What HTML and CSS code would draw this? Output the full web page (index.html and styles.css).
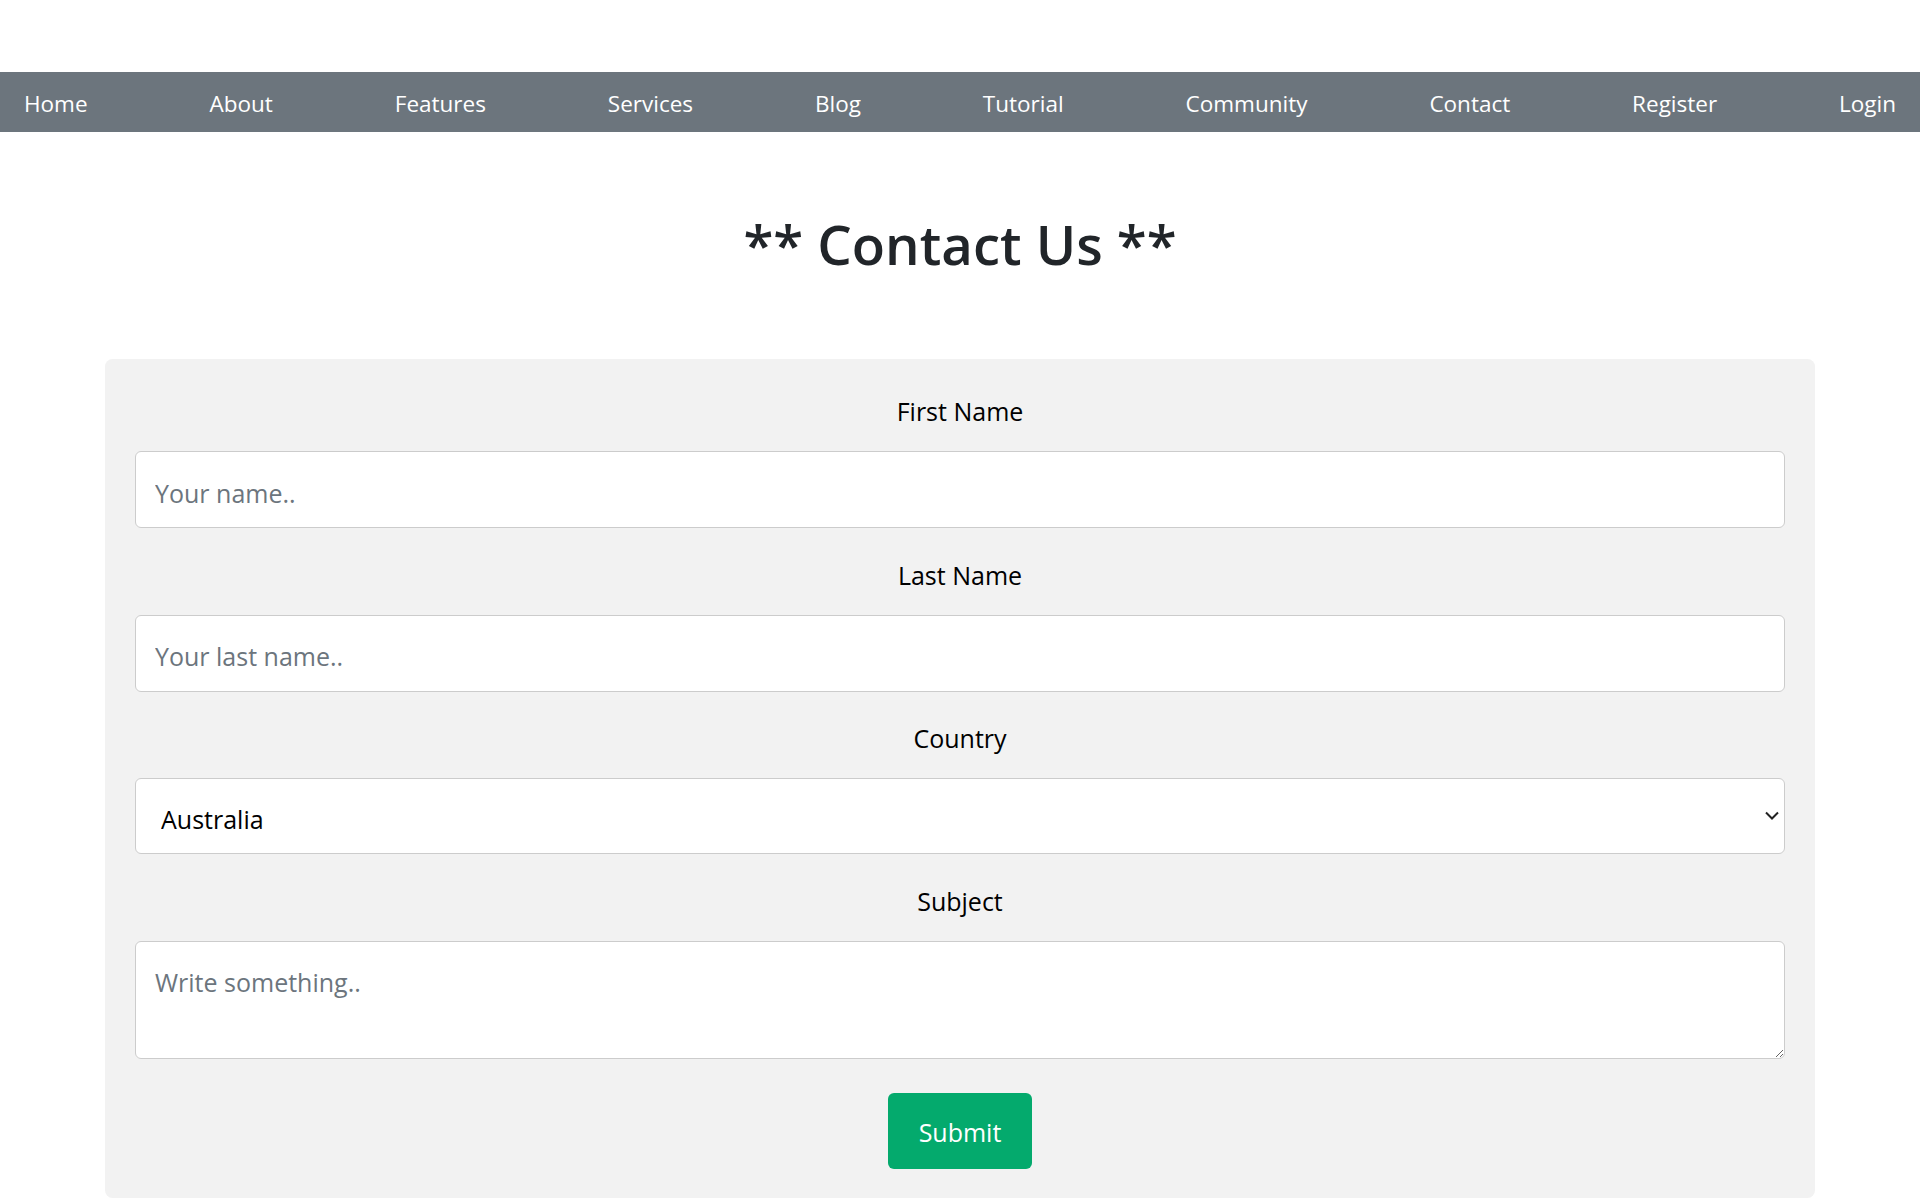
FILE: index.html
```html
<!DOCTYPE html>
<html lang="en">
<head>
<meta charset="utf-8">
<title>Contact Us</title>
<link rel="stylesheet" href="styles.css">
</head>
<body>
<div class="topspace"></div>
<nav class="navbar">
  <a href="#">Home</a>
  <a href="#">About</a>
  <a href="#">Features</a>
  <a href="#">Services</a>
  <a href="#">Blog</a>
  <a href="#">Tutorial</a>
  <a href="#">Community</a>
  <a href="#">Contact</a>
  <a href="#">Register</a>
  <a href="#">Login</a>
</nav>
<h1 class="title">** Contact Us **</h1>
<div class="container">
  <form class="contact-form">
    <label class="field-label" for="fname">First Name</label>
    <input class="field-input" type="text" id="fname" placeholder="Your name..">
    <label class="field-label" for="lname">Last Name</label>
    <input class="field-input" type="text" id="lname" placeholder="Your last name..">
    <label class="field-label" for="country">Country</label>
    <div class="select-wrap">
      <select class="field-select" id="country">
        <option>Australia</option>
        <option>Canada</option>
        <option>USA</option>
      </select>
      <svg class="select-arrow" width="14" height="9" viewBox="0 0 14 9"><path d="M1 1.5 L7 7.5 L13 1.5" fill="none" stroke="#222" stroke-width="2"/></svg>
    </div>
    <label class="field-label" for="subject">Subject</label>
    <textarea class="field-textarea" id="subject" placeholder="Write something.."></textarea>
    <div class="actions">
      <button class="submit-btn" type="button">Submit</button>
    </div>
  </form>
</div>
</body>
</html>
```
FILE: styles.css
```css
html, body {
  margin: 0;
  padding: 0;
  background: #ffffff;
}
body {
  font-family: "Open Sans", "Noto Sans", sans-serif;
  font-size: 22.5px;
  color: #212529;
}
.topspace {
  height: 72px;
}
.navbar {
  height: 60px;
  background: #6c757d;
  display: flex;
  align-items: center;
  justify-content: space-between;
  padding: 0 24px;
}
.navbar a {
  color: #ffffff;
  text-decoration: none;
  font-size: 22.5px;
  line-height: 36px;
  padding-top: 3px;
}
.title {
  margin: 80px 0 82px;
  text-align: center;
  font-size: 54.5px;
  font-weight: 600;
  line-height: 65.4px;
  color: #212529;
}
.container {
  width: 1710px;
  margin: 0 auto;
  box-sizing: border-box;
  background: #f2f2f2;
  border-radius: 7.5px;
  padding: 34px 30px 29px;
}
.contact-form {
  display: flex;
  flex-direction: column;
}
.field-label {
  display: block;
  text-align: center;
  font-size: 25px;
  line-height: 36px;
  color: #000000;
  margin-bottom: 22px;
}
.field-input,
.field-select,
.field-textarea {
  display: block;
  width: 100%;
  box-sizing: border-box;
  border: 1px solid #cccccc;
  border-radius: 6px;
  background: #ffffff;
  font-family: "Open Sans", "Noto Sans", sans-serif;
  font-size: 25px;
  margin: 0 0 28.5px;
  outline: none;
}
.field-input {
  height: 77px;
  padding: 21px 19px 15px;
  color: #212529;
}
.field-input::placeholder,
.field-textarea::placeholder {
  color: #6c757d;
  opacity: 1;
}
.select-wrap {
  position: relative;
  margin-bottom: 28.5px;
}
.field-select {
  -webkit-appearance: none;
  appearance: none;
  height: 76px;
  margin: 0;
  padding: 17px 25px 12px;
  color: #000000;
}
.select-arrow {
  position: absolute;
  right: 6px;
  top: 33px;
  pointer-events: none;
}
.field-textarea {
  height: 118px;
  padding: 22px 19px 10px;
  line-height: 36px;
  resize: vertical;
  color: #212529;
}
.actions {
  text-align: center;
  margin-top: 5.5px;
}
.submit-btn {
  width: 144px;
  height: 76px;
  box-sizing: border-box;
  padding: 2px 0 0;
  border: none;
  border-radius: 6px;
  background: #04aa6d;
  color: #ffffff;
  font-family: "Open Sans", "Noto Sans", sans-serif;
  font-size: 25px;
  cursor: pointer;
}
```
